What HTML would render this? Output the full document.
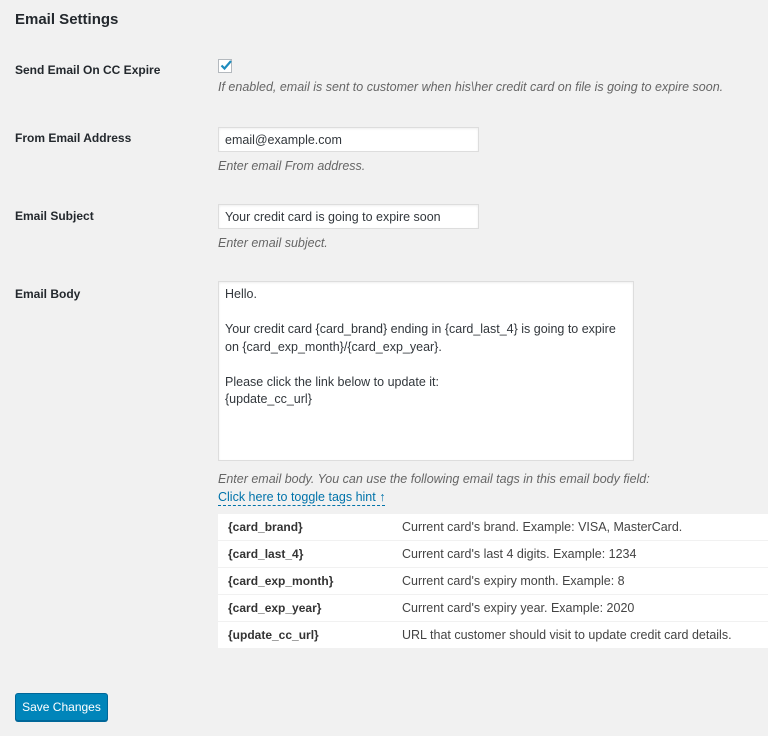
<!DOCTYPE html>
<html><head><style>
body{margin:0;background:#f1f1f1;font-family:"Liberation Sans",sans-serif;font-size:13px;color:#444;width:768px;height:736px;position:relative;overflow:hidden}
.a{position:absolute;white-space:nowrap}
h2{position:absolute;left:15px;top:11px;margin:0;font-size:15px;font-weight:bold;color:#23282d}
.lbl{font-weight:bold;color:#23282d;left:15px;font-size:12px}
.d{font-style:italic;color:#666;font-size:12.5px}
.inp{position:absolute;background:#fff;border:1px solid #ddd;box-shadow:inset 0 1px 2px rgba(0,0,0,.07);box-sizing:border-box;color:#32373c;padding:0 6px;font-size:12.5px}
.tbl{position:absolute;left:218px;top:514px;width:550px;background:#fff}
.row{height:26px;border-bottom:1px solid #f1f1f1;position:relative;line-height:26px}
.row b{position:absolute;left:10px;font-weight:bold;color:#333;font-size:12px}
.row span{position:absolute;left:184px;color:#444;white-space:nowrap;font-size:12.5px}
</style></head><body>
<h2>Email Settings</h2>
<div class="a lbl" style="top:63px">Send Email On CC Expire</div>
<div style="position:absolute;left:218px;top:59px;width:14px;height:14px;border:1px solid #b4b9be;background:#fff;box-sizing:border-box"></div>
<svg style="position:absolute;left:219px;top:58px" width="14" height="14" viewBox="0 0 14 14"><path d="M2.5 7.5 L5.5 10.5 L12 3" fill="none" stroke="#1e8cbe" stroke-width="2.2"/></svg>
<div class="a d" style="left:218px;top:80px">If enabled, email is sent to customer when his\her credit card on file is going to expire soon.</div>

<div class="a lbl" style="top:131px">From Email Address</div>
<div class="inp" style="left:218px;top:127px;width:261px;height:25px;line-height:24px">email@example.com</div>
<div class="a d" style="left:218px;top:159px">Enter email From address.</div>

<div class="a lbl" style="top:209px">Email Subject</div>
<div class="inp" style="left:218px;top:204px;width:261px;height:25px;line-height:24px">Your credit card is going to expire soon</div>
<div class="a d" style="left:218px;top:236px">Enter email subject.</div>

<div class="a lbl" style="top:287px">Email Body</div>
<div class="inp" style="left:218px;top:281px;width:416px;height:180px;padding:4px 6px;line-height:17.5px;white-space:pre">Hello.

Your credit card {card_brand} ending in {card_last_4} is going to expire
on {card_exp_month}/{card_exp_year}.

Please click the link below to update it:
{update_cc_url}</div>
<div class="a d" style="left:218px;top:472px">Enter email body. You can use the following email tags in this email body field:</div>
<div class="a" style="left:218px;top:489px;color:#0073aa;border-bottom:1px dashed #0073aa;line-height:16px;font-size:12.5px">Click here to toggle tags hint ↑</div>

<div class="tbl">
<div class="row"><b>{card_brand}</b><span>Current card's brand. Example: VISA, MasterCard.</span></div>
<div class="row"><b>{card_last_4}</b><span>Current card's last 4 digits. Example: 1234</span></div>
<div class="row"><b>{card_exp_month}</b><span>Current card's expiry month. Example: 8</span></div>
<div class="row"><b>{card_exp_year}</b><span>Current card's expiry year. Example: 2020</span></div>
<div class="row" style="border:0"><b>{update_cc_url}</b><span>URL that customer should visit to update credit card details.</span></div>
</div>

<div class="a" style="left:15px;top:693px;width:93px;height:28px;background:#0085ba;border:1px solid #006799;box-sizing:border-box;border-radius:3px;color:#fff;text-align:center;line-height:26px;font-size:12px;box-shadow:0 1px 0 #006799">Save Changes</div>
</body></html>
